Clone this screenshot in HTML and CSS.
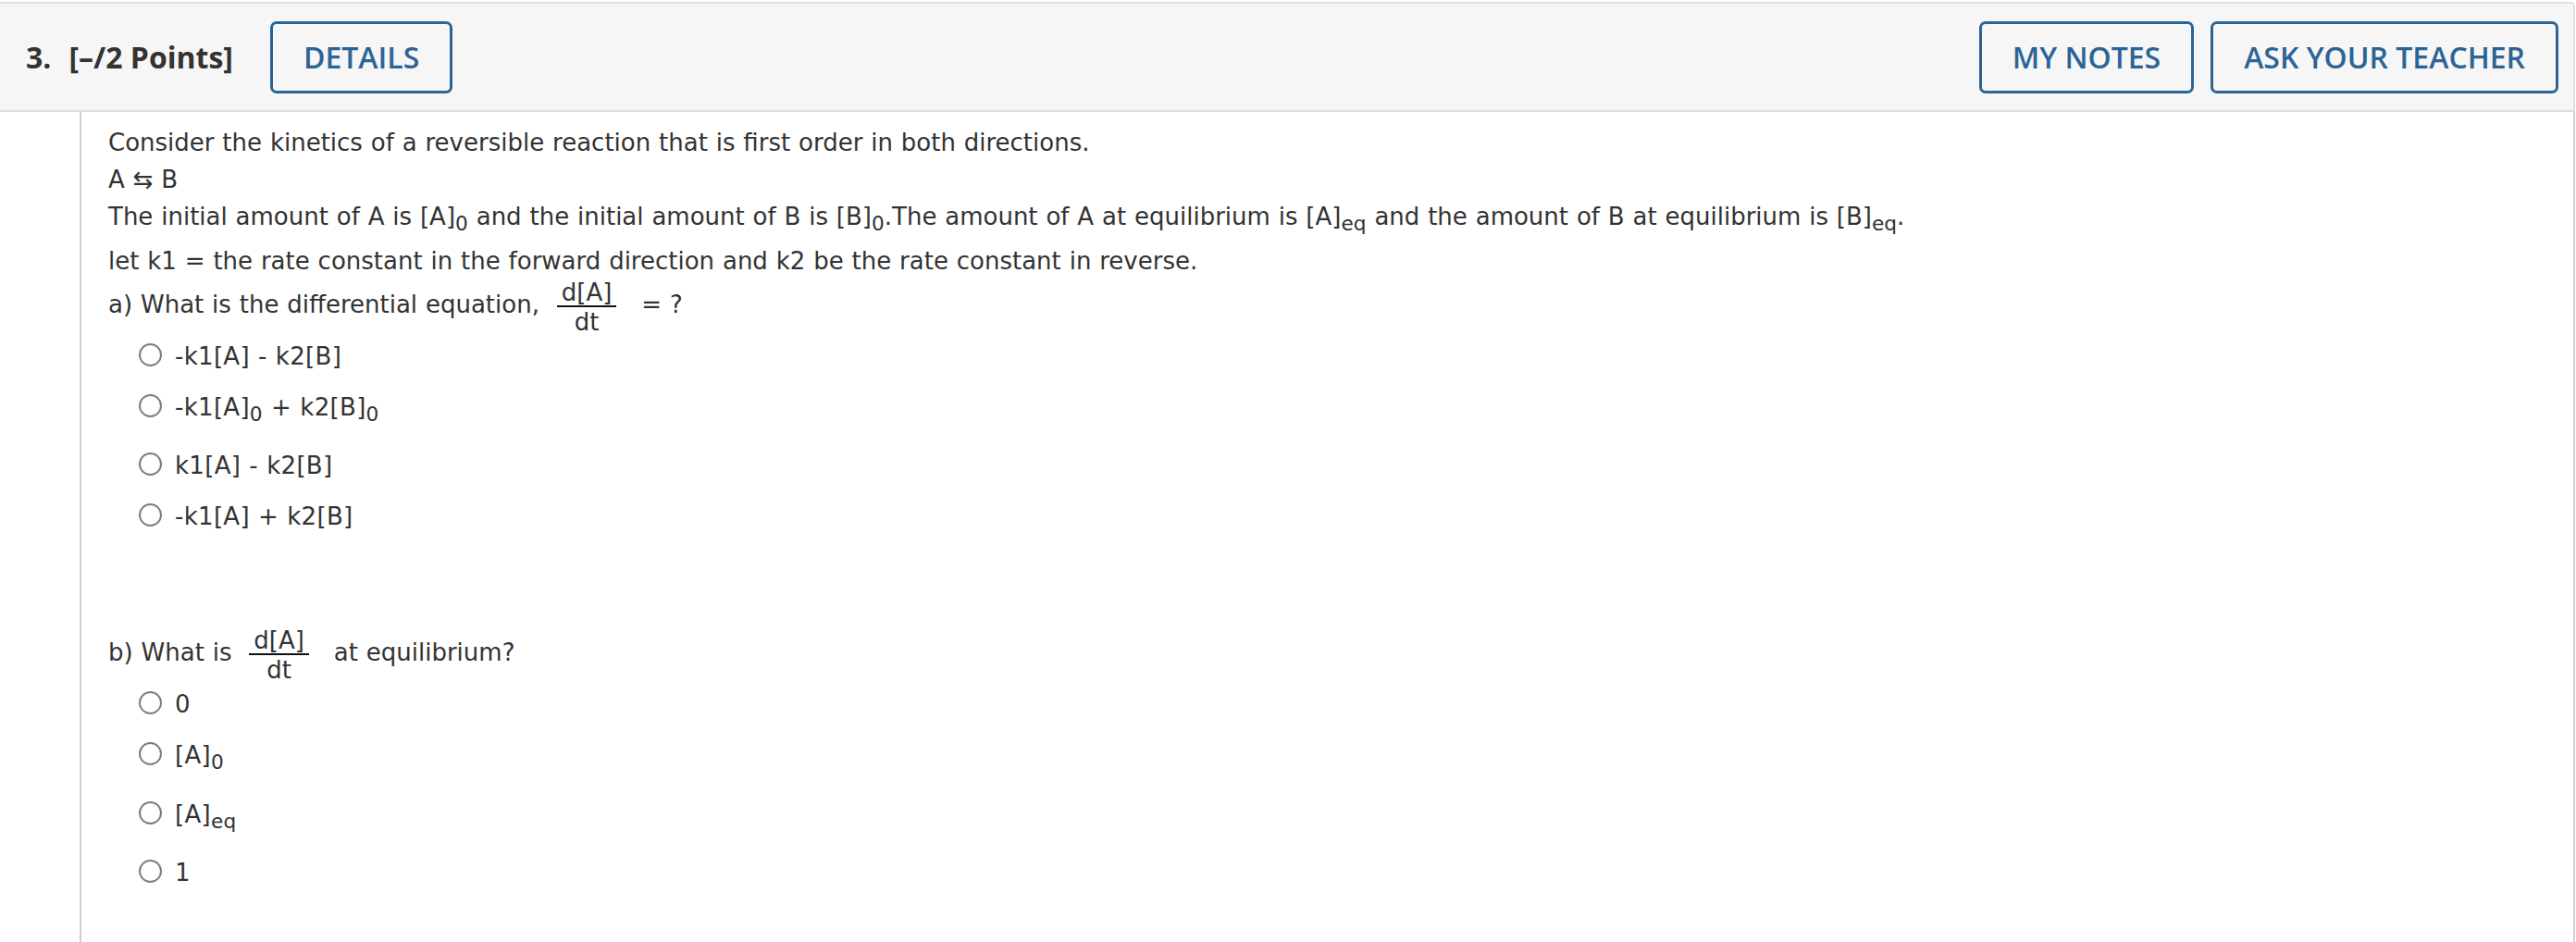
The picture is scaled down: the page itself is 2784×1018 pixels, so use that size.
FILE: index.html
```html
<!DOCTYPE html>
<html lang="en">
<head>
<meta charset="utf-8">
<title>Question 3</title>
<link rel="stylesheet" href="styles.css">
</head>
<body>
<div class="question">
  <div class="q-header">
    <div class="q-title"><span class="q-num">3.</span>[–/2 Points]</div>
    <button class="btn">DETAILS</button>
    <div class="actions">
      <button class="btn">MY NOTES</button>
      <button class="btn">ASK YOUR TEACHER</button>
    </div>
  </div>
  <div class="q-body">
    <p class="q-text">Consider the kinetics of a reversible reaction that is first order in both directions.<br>A ⇆ B<br>The initial amount of A is [A]<sub>0</sub> and the initial amount of B is [B]<sub>0</sub>.The amount of A at equilibrium is [A]<sub>eq</sub> and the amount of B at equilibrium is [B]<sub>eq</sub>.<br>let k1 = the rate constant in the forward direction and k2 be the rate constant in reverse.<br>a) What is the differential equation, <span class="frac"><span class="num">d[A]</span><span class="den">dt</span></span> = ?</p>
    <div class="options">
      <label class="opt"><span class="radio"></span>-k1[A] - k2[B]</label>
      <label class="opt"><span class="radio"></span>-k1[A]<sub>0</sub> + k2[B]<sub>0</sub></label>
      <label class="opt"><span class="radio"></span>k1[A] - k2[B]</label>
      <label class="opt"><span class="radio"></span>-k1[A] + k2[B]</label>
    </div>
    <p class="q-text part-b">b) What is <span class="frac"><span class="num">d[A]</span><span class="den">dt</span></span> at equilibrium?</p>
    <div class="options">
      <label class="opt"><span class="radio"></span>0</label>
      <label class="opt"><span class="radio"></span>[A]<sub>0</sub></label>
      <label class="opt"><span class="radio"></span>[A]<sub>eq</sub></label>
      <label class="opt"><span class="radio"></span>1</label>
    </div>
  </div>
</div>
</body>
</html>
```

FILE: styles.css
```css
* {
  box-sizing: border-box;
}

html,
body {
  margin: 0;
  padding: 0;
  background: #ffffff;
}

body {
  overflow: hidden;
}

.question {
  padding-top: 2px;
}

.q-header {
  display: flex;
  align-items: center;
  height: 119px;
  margin-right: 1px;
  padding: 0 16px 0 28px;
  background: #f6f6f6;
  border: 2px solid #dedede;
  border-left: 0;
  border-radius: 0 5px 0 0;
  font-family: "Open Sans", "Liberation Sans", sans-serif;
}

.q-title {
  font-size: 32px;
  font-weight: 700;
  color: #333333;
  margin-right: 40px;
  white-space: nowrap;
}

.q-num {
  margin-right: 19px;
}

.btn {
  height: 78px;
  padding: 0 33px;
  font-family: "Open Sans", "Liberation Sans", sans-serif;
  font-size: 32px;
  font-weight: 600;
  line-height: 1;
  color: #2b6495;
  background: transparent;
  border: 3px solid #2b6495;
  border-radius: 7px;
  white-space: nowrap;
}

.actions {
  display: flex;
  gap: 18px;
  margin-left: auto;
}

.q-body {
  margin-left: 86px;
  margin-right: 1px;
  min-height: 905px;
  padding: 13px 0 0 29px;
  border-left: 2px solid #cfcfcf;
  border-right: 2px solid #cfcfcf;
  border-bottom-right-radius: 6px;
  font-family: "DejaVu Sans", Verdana, sans-serif;
  font-size: 26px;
  line-height: 40px;
  color: #333333;
  word-spacing: 0.6px;
}

.q-text {
  margin: 0;
}

.part-b {
  margin-top: 100px;
}

.frac {
  display: inline-flex;
  flex-direction: column;
  align-items: center;
  vertical-align: 13px;
  margin: 0 18px 0 10px;
}

.num {
  line-height: 28px;
  padding: 0 5px;
  border-bottom: 2px solid #111111;
}

.den {
  line-height: 28px;
  padding-top: 2px;
}

.options {
  display: flex;
  flex-direction: column;
  gap: 15px;
  margin-top: 3px;
  padding-left: 33px;
}

.opt {
  display: block;
  line-height: 40px;
  letter-spacing: 0.3px;
}

.radio {
  display: inline-block;
  width: 25px;
  height: 25px;
  margin-right: 14px;
  vertical-align: -2px;
  background: #ffffff;
  border: 2px solid #7d7d7d;
  border-radius: 50%;
}
```
